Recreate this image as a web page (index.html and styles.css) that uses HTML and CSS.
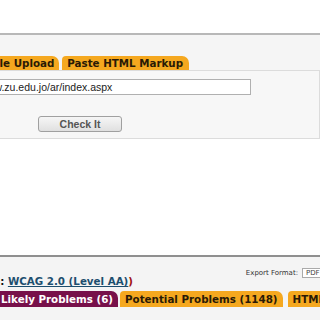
FILE: index.html
```html
<!DOCTYPE html>
<html>
<head>
<meta charset="utf-8">
<link rel="stylesheet" href="styles.css">
</head>
<body>
<div class="page">
  <div class="top"></div>
  <div class="form-area">
    <div class="tabs">
      <span class="tab">File Upload</span>
      <span class="tab">Paste HTML Markup</span>
    </div>
    <div class="panel">
      <div class="url-row"><input class="url" type="text" value="http://www.zu.edu.jo/ar/index.aspx"></div>
      <div class="btn-row"><button class="check">Check It</button></div>
    </div>
  </div>
  <div class="blank"></div>
  <div class="results">
    <div class="export"><span class="export-label">Export Format:</span><span class="select">PDF</span></div>
    <div class="guide">Guidelines: <a href="#">WCAG 2.0 (Level AA)</a><span class="paren">)</span></div>
    <div class="rtabs">
      <span class="rtab active">Likely Problems (6)</span>
      <span class="rtab">Potential Problems (1148)</span>
      <span class="rtab html">HTML Validation</span>
    </div>
  </div>
</div>
</body>
</html>
```
FILE: styles.css
```css
html, body { margin: 0; padding: 0; background: #fff; overflow: hidden; }
body { width: 320px; height: 320px; }
.page { font-family: "DejaVu Sans", Verdana, sans-serif; }
.top { height: 33px; background: #fff; border-bottom: 2px solid #b8b8b8; }
.form-area { background: #f5f5f5; padding-top: 21px; margin-left: -70px; width: 390px; }
.tabs { display: flex; gap: 3px; padding-left: 54px; height: 14px; }
.tab { background: #f5a81f; color: #2a1a05; font-weight: bold; font-size: 10.3px; line-height: 14px; padding: 0 5px 0 5px; border-radius: 4px 7px 0 0; }
.tab + .tab { padding-right: 6px; }
.panel { box-sizing: border-box; height: 69px; background: #f7f7f7; border: 1px solid #dcdcdc; }
.url-row { padding-top: 8px; padding-left: 19px; }
.url { display: block; width: 301px; height: 16px; box-sizing: border-box; margin: 0; border: 1px solid #b0b0b0; background: #fff; font-family: "Liberation Sans", Arial, sans-serif; font-size: 10.5px; color: #222; padding: 0 2px; outline: none; }
.btn-row { padding-top: 21px; padding-left: 107px; }
.check { display: block; width: 84px; height: 16px; border: 1px solid #a0a0a0; border-radius: 3px; background: linear-gradient(#f6f6f6, #e0e0e0); color: #555; font-family: "Liberation Sans", Arial, sans-serif; font-size: 10.5px; font-weight: bold; padding: 0; line-height: 14px; }
.blank { height: 116px; border-bottom: 2px solid #8f8f8f; }
.results { background: #f4f4f4; height: 64px; padding-top: 11px; box-sizing: border-box; }
.export { display: flex; justify-content: flex-end; align-items: center; gap: 4px; height: 10px; margin-right: -22px; }
.export-label { font-size: 7px; color: #333; }
.select { box-sizing: border-box; font-size: 7px; border: 1px solid #aaa; background: #fff; padding: 0 3px; width: 40px; height: 10px; line-height: 8px; color: #444; }
.guide { font-size: 10.3px; font-weight: bold; color: #111; line-height: 12px; margin-top: -3px; margin-left: -61px; white-space: nowrap; }
.guide a { color: #1d4e6e; }
.paren { color: #a01010; }
.rtabs { display: flex; gap: 2px; margin-top: 4px; margin-left: -4px; white-space: nowrap; }
.rtab { background: #f5a81f; color: #2a1a05; font-weight: bold; font-size: 10.3px; line-height: 16px; padding: 0 5px; border-radius: 4px 7px 0 0; }
.rtab.active { background: #77104a; color: #fff; }
.rtab.html { margin-left: 3px; }
```
